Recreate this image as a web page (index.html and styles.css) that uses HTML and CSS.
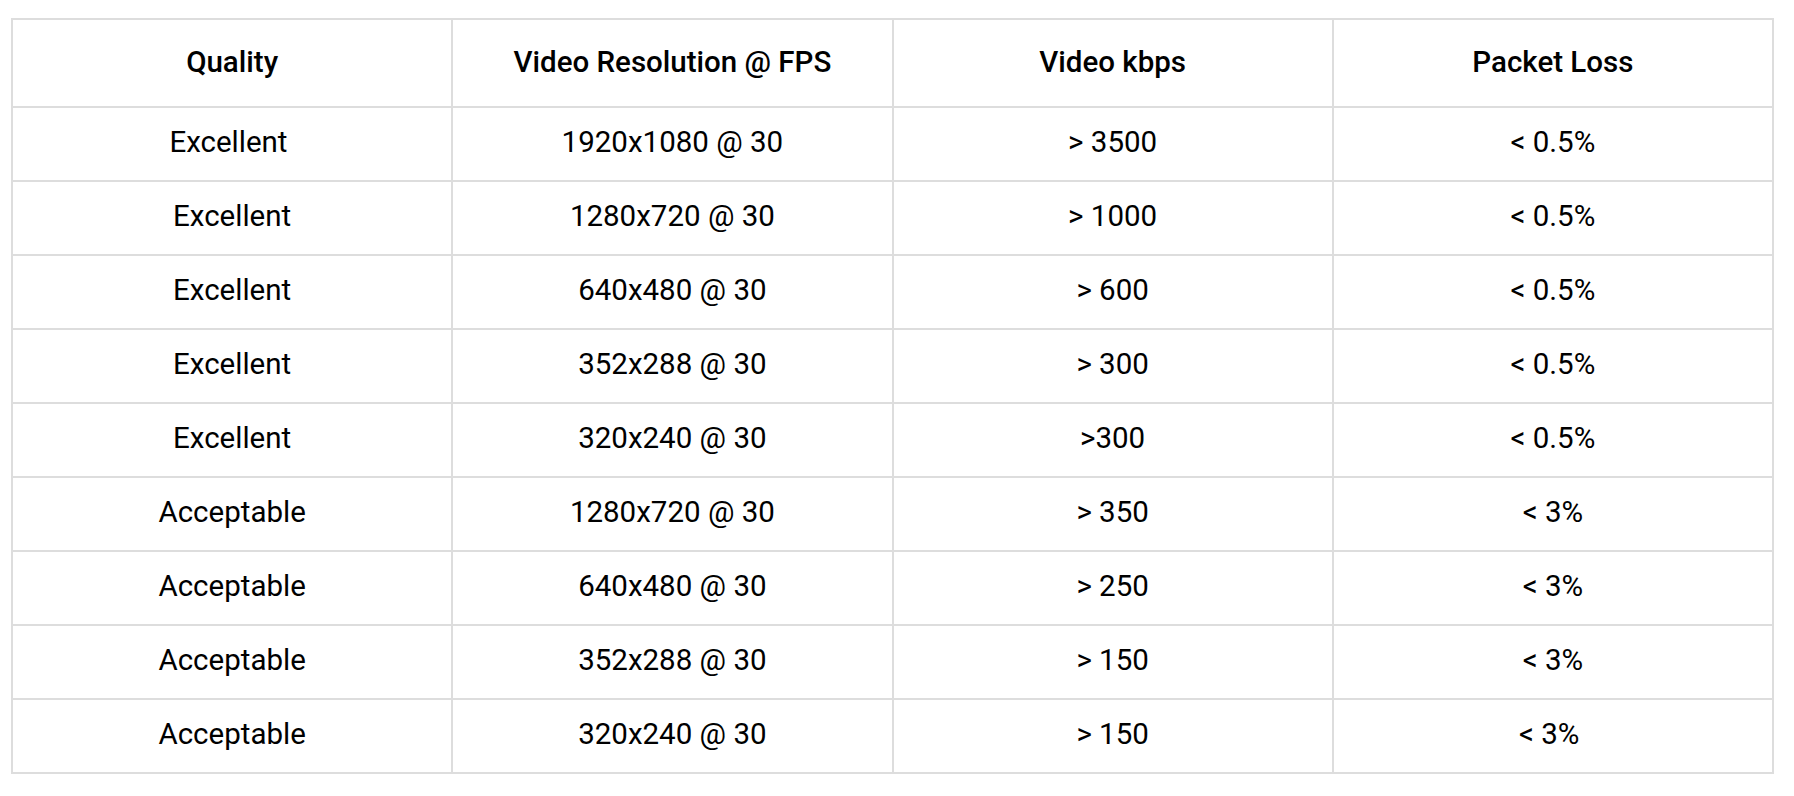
FILE: index.html
```html
<!DOCTYPE html>
<html lang="en">
<head>
<meta charset="utf-8">
<title>Video Quality</title>
<link rel="stylesheet" href="styles.css">
</head>
<body>
<div class="wrap">
<table class="quality">
<thead>
<tr><th>Quality</th><th>Video Resolution @ FPS</th><th>Video kbps</th><th>Packet Loss</th></tr>
</thead>
<tbody>
<tr><td>Excellent&nbsp;</td><td>1920x1080 @ 30</td><td>&gt; 3500</td><td>&lt; 0.5%</td></tr>
<tr><td>Excellent</td><td>1280x720 @ 30</td><td>&gt; 1000</td><td>&lt; 0.5%</td></tr>
<tr><td>Excellent</td><td>640x480 @ 30</td><td>&gt; 600</td><td>&lt; 0.5%</td></tr>
<tr><td>Excellent</td><td>352x288 @ 30</td><td>&gt; 300</td><td>&lt; 0.5%</td></tr>
<tr><td>Excellent</td><td>320x240 @ 30</td><td>&gt;300</td><td>&lt; 0.5%</td></tr>
<tr><td>Acceptable</td><td>1280x720 @ 30</td><td>&gt; 350</td><td>&lt; 3%</td></tr>
<tr><td>Acceptable</td><td>640x480 @ 30</td><td>&gt; 250</td><td>&lt; 3%</td></tr>
<tr><td>Acceptable</td><td>352x288 @ 30</td><td>&gt; 150</td><td>&lt; 3%</td></tr>
<tr><td>Acceptable</td><td>320x240 @ 30</td><td>&gt; 150</td><td>&lt; 3%&nbsp;</td></tr>
</tbody>
</table>
</div>
</body>
</html>
```
FILE: styles.css
```css
html, body {
  margin: 0;
  padding: 0;
  background: #ffffff;
}
.wrap {
  padding: 18px 20px 0 11px;
}
.quality {
  width: 1763px;
  table-layout: fixed;
  border-collapse: collapse;
  font-family: Roboto, "Liberation Sans", Arial, sans-serif;
  font-size: 29.5px;
  color: #000000;
}
.quality th,
.quality td {
  border: 2px solid #dddddd;
  text-align: center;
  vertical-align: middle;
  white-space: pre;
  line-height: 34px;
}
.quality th {
  font-weight: 500;
  padding: 0 10px 2px;
  height: 84px;
}
.quality td {
  font-weight: 400;
  padding: 0 10px 4px;
  height: 68px;
}
```
